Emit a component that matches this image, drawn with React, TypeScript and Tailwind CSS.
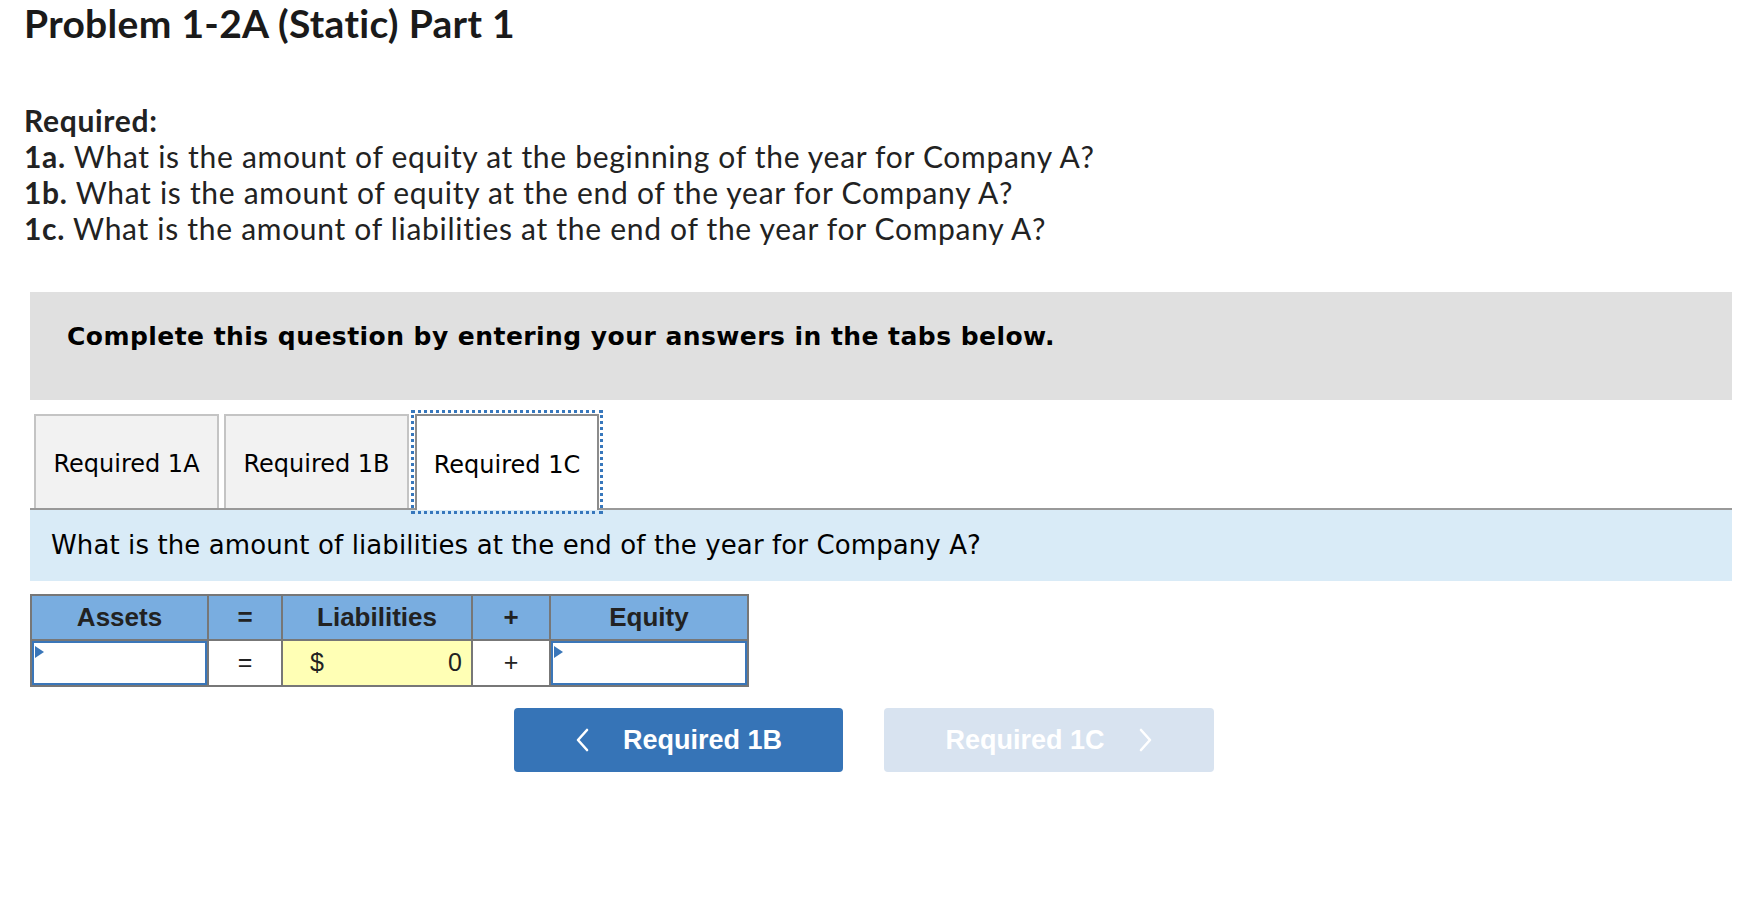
import React from "react";

const tabs = ["Required 1A", "Required 1B", "Required 1C"];

function Flag() {
  return (
    <svg className="absolute left-[1px] top-[3px]" width="10" height="12" viewBox="0 0 10 12">
      <path d="M0 0 L9 6 L0 12 Z" fill="#3a76b9" />
    </svg>
  );
}

function Chevron({ dir }: { dir: "left" | "right" }) {
  return (
    <svg width="15" height="24" viewBox="0 0 15 24">
      <path
        d={dir === "left" ? "M12 2 L3 12 L12 22" : "M3 2 L12 12 L3 22"}
        fill="none"
        stroke="white"
        strokeWidth="2.6"
        strokeLinecap="round"
        strokeLinejoin="round"
      />
    </svg>
  );
}

export default function App() {
  return (
    <div className="w-[1748px] h-[922px] overflow-hidden bg-white text-[#222]">
      <div className="pl-[24px] font-['Lato','Liberation_Sans',sans-serif]">
        <h1 className="text-[39px] leading-[47px] font-bold tracking-[0.3px] text-[#1a1a1a]">
          Problem 1-2A (Static) Part 1
        </h1>
        <div className="mt-[55px] text-[30px] leading-[36px] tracking-[0.7px]">
          <p className="font-bold">Required:</p>
          <p>
            <b>1a.</b> What is the amount of equity at the beginning of the year for Company A?
          </p>
          <p>
            <b>1b.</b> What is the amount of equity at the end of the year for Company A?
          </p>
          <p>
            <b>1c.</b> What is the amount of liabilities at the end of the year for Company A?
          </p>
        </div>
      </div>

      <div className="ml-[30px] w-[1702px] mt-[46px]">
        <div className="h-[108px] bg-[#e0e0e0] pl-[37px] pt-[30px] font-['DejaVu_Sans',sans-serif] text-[25px] leading-[30px] tracking-[0.45px] font-bold text-black">
          Complete this question by entering your answers in the tabs below.
        </div>

        <div className="mt-[14px] flex items-end gap-[5px] pl-[4px] border-b-2 border-[#999] font-['DejaVu_Sans',sans-serif] text-[24px]">
          {tabs.map((t, i) =>
            i === 2 ? (
              <div
                key={t}
                className="ml-[1px] h-[96px] w-[184px] -mb-[2px] pt-[4px] flex items-center justify-center bg-white border-2 border-b-0 border-[#8c8c8c] outline-[3px] outline-dotted outline-[#3777bc] outline-offset-[1px] text-black"
              >
                {t}
              </div>
            ) : (
              <div
                key={t}
                className="h-[94px] w-[185px] pt-[4px] flex items-center justify-center bg-[#f2f2f2] border-2 border-b-0 border-[#c4c4c4] text-black"
              >
                {t}
              </div>
            )
          )}
        </div>

        <div className="h-[71px] bg-[#d9ebf7] pl-[21px] flex items-center font-['DejaVu_Sans',sans-serif] text-[26px] tracking-[0.1px] text-black">
          What is the amount of liabilities at the end of the year for Company A?
        </div>

        <div className="mt-[13px] w-[719px] grid grid-cols-[175px_72px_188px_76px_196px] grid-rows-[43px_44px] gap-[2px] p-[2px] bg-[#777] font-['Liberation_Sans',sans-serif] text-[26px] text-[#222]">
          <div className="bg-[#79ade0] flex items-center justify-center font-bold">Assets</div>
          <div className="bg-[#79ade0] flex items-center justify-center font-bold">=</div>
          <div className="bg-[#79ade0] flex items-center justify-center font-bold">Liabilities</div>
          <div className="bg-[#79ade0] flex items-center justify-center font-bold">+</div>
          <div className="bg-[#79ade0] flex items-center justify-center font-bold">Equity</div>

          <div className="relative bg-white border-2 border-[#3a76b9]">
            <Flag />
          </div>
          <div className="bg-white flex items-center justify-center text-[25px]">=</div>
          <div className="bg-[#ffffb5] flex items-center justify-between pl-[27px] pr-[9px] text-[25px]">
            <span>$</span>
            <span>0</span>
          </div>
          <div className="bg-white flex items-center justify-center text-[25px]">+</div>
          <div className="relative bg-white border-2 border-[#3a76b9]">
            <Flag />
          </div>
        </div>

        <div className="mt-[21px] flex gap-[41px] pl-[484px] font-['Liberation_Sans',sans-serif] text-[27px] font-bold text-white">
          <div className="w-[329px] h-[64px] rounded-[4px] bg-[#3674b7] flex items-center justify-center gap-[33px]">
            <Chevron dir="left" />
            <span>Required 1B</span>
          </div>
          <div className="w-[330px] h-[64px] rounded-[4px] bg-[#d8e3f0] flex items-center justify-center gap-[33px]">
            <span>Required 1C</span>
            <Chevron dir="right" />
          </div>
        </div>
      </div>
    </div>
  );
}
